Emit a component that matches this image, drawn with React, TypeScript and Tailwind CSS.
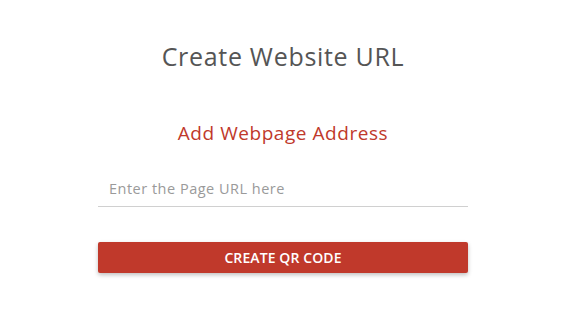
export default function App() {
  return (
    <div className="w-[569px] h-[336px] bg-white flex flex-col items-center pr-[3px]" style={{ fontFamily: '"Open Sans", "Noto Sans", sans-serif' }}>
      <h1 className="mt-[40px] text-[25px] leading-[32px] text-[#555555] font-normal tracking-[0.7px]">Create Website URL</h1>
      <h2 className="mt-[48px] text-[19px] leading-[26px] text-[#c0392b] font-normal tracking-[0.55px]">Add Webpage Address</h2>
      <div className="mt-[30px] w-[370px] border-b border-[#d0d0d0] pl-[11px] pb-[6px]">
        <input
          className="w-full outline-none text-[14.5px] leading-[20px] tracking-[0.5px] text-[#333] placeholder:text-[#9a9a9a] bg-transparent"
          placeholder="Enter the Page URL here"
        />
      </div>
      <button className="mt-[35px] w-[370px] h-[31px] bg-[#c0392b] text-white text-[14px] font-semibold rounded-[2px] shadow-[0_2px_4px_rgba(0,0,0,0.25)] tracking-[0.1px]">
        CREATE QR CODE
      </button>
    </div>
  );
}
